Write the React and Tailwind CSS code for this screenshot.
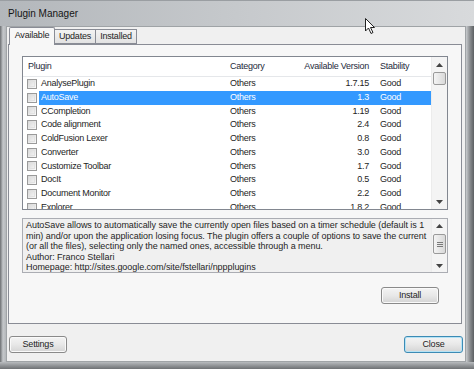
const plugins = [
  { name: "AnalysePlugin", cat: "Others", ver: "1.7.15", stab: "Good" },
  { name: "AutoSave", cat: "Others", ver: "1.3", stab: "Good", selected: true },
  { name: "CCompletion", cat: "Others", ver: "1.19", stab: "Good" },
  { name: "Code alignment", cat: "Others", ver: "2.4", stab: "Good" },
  { name: "ColdFusion Lexer", cat: "Others", ver: "0.8", stab: "Good" },
  { name: "Converter", cat: "Others", ver: "3.0", stab: "Good" },
  { name: "Customize Toolbar", cat: "Others", ver: "1.7", stab: "Good" },
  { name: "DocIt", cat: "Others", ver: "0.5", stab: "Good" },
  { name: "Document Monitor", cat: "Others", ver: "2.2", stab: "Good" },
  { name: "Explorer", cat: "Others", ver: "1.8.2", stab: "Good" },
];

const description = [
  "AutoSave allows to automatically save the currently open files based on a timer schedule (default is 1",
  "min) and/or upon the application losing focus. The plugin offers a couple of options to save the current",
  "(or all the files), selecting only the named ones, accessible through a menu.",
  "Author: Franco Stellari",
  "Homepage: http://sites.google.com/site/fstellari/nppplugins",
];

function Arrow({ down }) {
  return (
    <svg width="7" height="4" viewBox="0 0 7 4">
      <polygon points={down ? "0,0 7,0 3.5,4" : "0,4 7,4 3.5,0"} fill="#444" />
    </svg>
  );
}

function Scrollbar({ upH, thumbGap, thumbH, downH, grip }) {
  return (
    <div className="w-[16px] shrink-0 flex flex-col bg-[#f4f4f4] border-l border-[#ececec]">
      <div className="flex items-center justify-center" style={{ height: upH }}>
        <Arrow />
      </div>
      <div style={{ height: thumbGap }} />
      <div
        className="mx-[1px] rounded-[2px] border border-[#9a9a9a] bg-gradient-to-r from-[#f4f4f4] to-[#d9d9d9] flex flex-col items-center justify-center gap-[1px]"
        style={{ height: thumbH }}
      >
        {grip && (
          <>
            <div className="w-[6px] h-px bg-[#7a7a7a]" />
            <div className="w-[6px] h-px bg-[#7a7a7a]" />
            <div className="w-[6px] h-px bg-[#7a7a7a]" />
          </>
        )}
      </div>
      <div className="flex-1" />
      <div className="flex items-center justify-center" style={{ height: downH }}>
        <Arrow down />
      </div>
    </div>
  );
}

function Checkbox() {
  return (
    <div className="w-[10px] h-[10px] border border-[#9a9a9a] bg-gradient-to-br from-[#d6d6d6] to-[#fafafa] p-px">
      <div className="w-full h-full border border-[#e2e2e2]" />
    </div>
  );
}

function Button({ children, primary, className = "" }) {
  return (
    <div
      className={`h-[17px] flex items-center justify-center rounded-[3px] border text-[9px] tracking-[-0.2px] bg-gradient-to-b from-[#f4f4f4] via-[#e8e8e8] to-[#d4d4d4] ${
        primary ? "border-[#3c8bb5] shadow-[inset_0_0_0_1px_#b6e3f5]" : "border-[#8a8a8a] shadow-[inset_0_0_0_1px_#fafafa]"
      } ${className}`}
    >
      {children}
    </div>
  );
}

export default function App() {
  return (
    <div className="w-[474px] h-[369px] overflow-hidden relative flex flex-col bg-[#8d9196] font-['Liberation_Sans',Arial,sans-serif] text-[#1e1e1e]">
      <div className="h-[26px] shrink-0 flex items-center pl-[8px] text-[10px] text-[#151515] bg-gradient-to-r from-[#b3b7bb] via-[#c6c9cc] to-[#d8dadc] border-t border-[#9a9ea2]">
        Plugin Manager
      </div>

      <div className="flex flex-1 min-h-0">
        <div className="w-[6px] bg-gradient-to-r from-[#6c6f72] via-[#c5c8cb] to-[#b4b7ba]" />

        <div className="flex-1 flex flex-col bg-[#f0f0f0] border border-[#9fa3a6]">
          {/* tabs */}
          <div className="h-[18px] flex items-end ml-[2px] relative z-10 text-[9px] tracking-[-0.2px]">
            <div className="w-[46px] h-[18px] border border-b-0 border-[#898c95] bg-[#f7f7f7] rounded-t-[2px] flex items-center justify-center pb-[2px]">
              Available
            </div>
            <div className="w-[41px] h-[15px] mb-px border border-l-0 border-[#898c95] bg-gradient-to-b from-[#f3f3f3] to-[#e2e2e2] flex items-center justify-center">
              Updates
            </div>
            <div className="w-[41px] h-[15px] mb-px border border-l-0 border-[#898c95] bg-gradient-to-b from-[#f3f3f3] to-[#e2e2e2] flex items-center justify-center">
              Installed
            </div>
          </div>

          {/* tab panel */}
          <div className="-mt-px ml-[1px] mr-[3px] h-[280px] border border-[#898c95] bg-[#f7f7f7] pt-[11px] px-[13px] flex flex-col">
            {/* list view */}
            <div className="h-[154px] border border-[#828790] bg-white flex overflow-hidden text-[9px] tracking-[-0.25px]">
              <div className="flex-1 flex flex-col min-w-0">
                <div className="h-[20px] shrink-0 flex items-center border-b border-[#e5e7ea] text-[#1e2a3b]">
                  <div className="w-[207px] pl-[5px]">Plugin</div>
                  <div className="w-[65px]">Category</div>
                  <div className="w-[74px] text-right whitespace-nowrap">Available Version</div>
                  <div className="pl-[11px]">Stability</div>
                </div>
                {plugins.map((p) => (
                  <div key={p.name} className="h-[13.75px] shrink-0 flex items-center">
                    <div className="w-[16px] pl-[4px] flex items-center">
                      <Checkbox />
                    </div>
                    <div
                      className={`flex-1 h-full flex items-center ${
                        p.selected ? "bg-[#3399ff] text-white" : ""
                      }`}
                    >
                      <div className="w-[191px] pl-[2px] whitespace-nowrap">{p.name}</div>
                      <div className="w-[65px]">{p.cat}</div>
                      <div className="w-[74px] text-right">{p.ver}</div>
                      <div className="pl-[11px]">{p.stab}</div>
                    </div>
                  </div>
                ))}
              </div>
              <Scrollbar upH={15} thumbGap={0} thumbH={13} downH={14} />
            </div>

            {/* description */}
            <div className="mt-[8px] h-[55px] border border-[#abadb3] bg-[#f0f0f0] flex overflow-hidden">
              <div className="flex-1 pl-[3px] pt-[1px] text-[9px] leading-[10.6px] tracking-[-0.05px] whitespace-nowrap overflow-hidden">
                {description.map((line) => (
                  <div key={line}>{line}</div>
                ))}
              </div>
              <Scrollbar upH={14} thumbGap={1} thumbH={20} downH={13} grip />
            </div>

            <div className="flex justify-end mt-[14px] pr-[9px]">
              <Button className="w-[58px]">Install</Button>
            </div>
          </div>

          {/* bottom buttons */}
          <div className="mt-[12px] px-[2px] flex justify-between">
            <Button className="w-[58px]">Settings</Button>
            <Button primary className="w-[59px]">Close</Button>
          </div>
        </div>

        <div className="w-[8px] bg-gradient-to-r from-[#c9cccf] via-[#8a8d90] to-[#5d6063]" />
      </div>

      <div className="h-[7px] shrink-0 bg-gradient-to-b from-[#b8bbbe] to-[#6e7174]" />

      {/* mouse pointer over the title bar */}
      <svg className="absolute left-[365px] top-[18px]" width="11" height="17" viewBox="0 0 11 17">
        <path d="M0.5 0.5 L0.5 13 L3.5 10 L6 15.5 L8 14.5 L5.5 9.5 L9.5 9.5 Z" fill="#fff" stroke="#222" strokeWidth="1" />
      </svg>
    </div>
  );
}
